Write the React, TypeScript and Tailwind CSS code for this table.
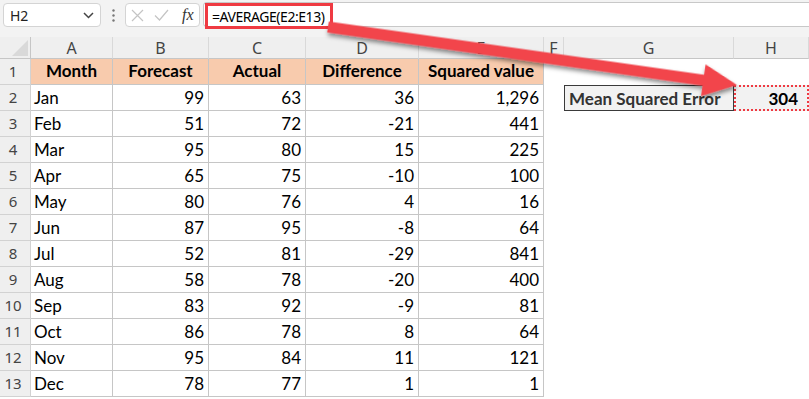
import React from "react";

type Row = [string, number, number, number, string];

const rows: Row[] = [
  ["Jan", 99, 63, 36, "1,296"],
  ["Feb", 51, 72, -21, "441"],
  ["Mar", 95, 80, 15, "225"],
  ["Apr", 65, 75, -10, "100"],
  ["May", 80, 76, 4, "16"],
  ["Jun", 87, 95, -8, "64"],
  ["Jul", 52, 81, -29, "841"],
  ["Aug", 58, 78, -20, "400"],
  ["Sep", 83, 92, -9, "81"],
  ["Oct", 86, 78, 8, "64"],
  ["Nov", 95, 84, 11, "121"],
  ["Dec", 78, 77, 1, "1"],
];

const letters = ["A", "B", "C", "D", "E", "F", "G", "H"];
const headers = ["Month", "Forecast", "Actual", "Difference", "Squared value"];

const cellFont = { fontFamily: "Lato, 'Liberation Sans', sans-serif" };
const uiFont = { fontFamily: "'Noto Sans', 'Open Sans', sans-serif" };

function RowHead({ n }: { n: number }) {
  return (
    <div
      className="h-[26px] bg-[#efefef] border-b border-r border-[#d2d2d2] flex items-center justify-center pr-[4px] text-[15px] text-[#444]"
      style={uiFont}
    >
      {n}
    </div>
  );
}

function Cell({
  children,
  align = "right",
  bold = false,
  head = false,
}: {
  children?: React.ReactNode;
  align?: "left" | "right" | "center";
  bold?: boolean;
  head?: boolean;
}) {
  const a =
    align === "left" ? "justify-start pl-[3px]" : align === "center" ? "justify-center" : "justify-end pr-[4px]";
  return (
    <div
      className={`h-[26px] border-b border-r border-[#c6c6c6] flex items-center leading-[17px] text-[17px] text-black ${a} ${
        bold ? "font-bold pb-[2px]" : ""
      } ${head ? "bg-[#f8cbad]" : "bg-white"}`}
      style={cellFont}
    >
      {children}
    </div>
  );
}

function Blank() {
  return <div className="h-[26px] bg-white" />;
}

function Arrow() {
  // shaft from the formula box down to the result cell
  const x0 = 328;
  const y0 = 27;
  const x1 = 737;
  const y1 = 85;
  const len = Math.hypot(x1 - x0, y1 - y0);
  const ang = (Math.atan2(y1 - y0, x1 - x0) * 180) / Math.PI;
  const head = 34;
  return (
    <svg className="absolute inset-0 pointer-events-none" width={809} height={399}>
      <defs>
        <filter id="arrowShadow" x="-10%" y="-50%" width="120%" height="200%">
          <feDropShadow dx="1" dy="3" stdDeviation="2" floodColor="#000" floodOpacity="0.45" />
        </filter>
      </defs>
      <g transform={`translate(${x0} ${y0}) rotate(${ang})`} filter="url(#arrowShadow)">
        <polygon
          points={`0,-5.5 ${len - head},-5.5 ${len - head},-16 ${len},0 ${len - head},16 ${len - head},5.5 0,5.5`}
          fill="#f2444b"
        />
      </g>
    </svg>
  );
}

export default function App() {
  return (
    <div className="relative w-[809px] h-[399px] overflow-hidden bg-white">
      {/* formula bar */}
      <div className="h-[37px] bg-[#f3f3f3] flex items-start pt-[3px]" style={uiFont}>
        <div className="ml-[3px] w-[98px] h-[24px] bg-white border border-[#d4d4d4] rounded-[4px] flex items-center pl-[6px] pr-[6px] text-[14px] text-[#222]">
          <span className="flex-1">H2</span>
          <svg width="11" height="7" viewBox="0 0 11 7">
            <path d="M1 1l4.5 4.5L10 1" fill="none" stroke="#444" strokeWidth="1.5" />
          </svg>
        </div>
        <div className="w-[24px] h-[24px] flex items-center justify-center">
          <svg width="3" height="13" viewBox="0 0 3 13">
            <circle cx="1.5" cy="1.5" r="1.2" fill="#777" />
            <circle cx="1.5" cy="6.5" r="1.2" fill="#777" />
            <circle cx="1.5" cy="11.5" r="1.2" fill="#777" />
          </svg>
        </div>
        <div className="w-[75px] h-[24px] bg-white border border-[#d4d4d4] rounded-[4px] flex items-center pl-[5px] gap-[10px]">
          <svg width="13" height="13" viewBox="0 0 13 13">
            <path d="M1 1l11 11M12 1L1 12" stroke="#c4c4c4" strokeWidth="1.2" />
          </svg>
          <svg width="15" height="12" viewBox="0 0 15 12">
            <path d="M1 6.5l4.5 4.5L14 1" fill="none" stroke="#c4c4c4" strokeWidth="1.2" />
          </svg>
          <span
            className="italic text-[16px] text-[#333] leading-none ml-[3px]"
            style={{ fontFamily: "'Liberation Serif', serif" }}
          >
            fx
          </span>
        </div>
        <div className="ml-[3px] -mt-[1px] flex-1 h-[25px] bg-white border-y border-l border-[#c8c8c8] rounded-l-[4px] flex items-start">
          <div className="ml-[1px] h-[26px] w-[128px] border-[3px] border-[#ef3a42] flex items-center pl-[4px] text-[14px] tracking-[-0.45px] whitespace-nowrap text-black">
            =AVERAGE(E2:E13)
          </div>
        </div>
      </div>

      {/* sheet grid */}
      <div className="grid grid-cols-[31px_82px_96px_97px_113px_125px_20px_170px_75px]">
        {/* column headings */}
        <div className="h-[22px] bg-[#efefef] border-b border-r border-[#c6c6c6] relative overflow-hidden">
          <div className="absolute right-[2px] bottom-[2px] w-0 h-0 border-l-[16px] border-l-transparent border-b-[16px] border-b-[#d9d9d9]" />
        </div>
        {letters.map((l) => (
          <div
            key={l}
            className="h-[22px] bg-[#efefef] border-b border-r border-[#c6c6c6] border-r-[#d9d9d9] flex items-center justify-center text-[16px] text-[#444]"
            style={uiFont}
          >
            {l}
          </div>
        ))}

        {/* row 1 */}
        <RowHead n={1} />
        {headers.map((h) => (
          <Cell key={h} align="center" bold head>
            {h}
          </Cell>
        ))}
        <Blank />
        <Blank />
        <Blank />

        {rows.map((r, i) => (
          <React.Fragment key={r[0]}>
            <RowHead n={i + 2} />
            <Cell align="left">{r[0]}</Cell>
            <Cell>{r[1]}</Cell>
            <Cell>{r[2]}</Cell>
            <Cell>{r[3]}</Cell>
            <Cell>{r[4]}</Cell>
            <Blank />
            {i === 0 ? (
              <>
                <div
                  className="h-[26px] bg-[#f2f2f2] border border-[#3a3a3a] flex items-center leading-[17px] pl-[4px] text-[17px] font-bold text-[#333]"
                  style={cellFont}
                >
                  Mean Squared Error
                </div>
                <div
                  className="h-[26px] bg-[#f2f2f2] border-2 border-dotted border-[#ef3a42] flex items-center leading-[17px] justify-end pr-[9px] text-[17px] font-bold text-black"
                  style={cellFont}
                >
                  304
                </div>
              </>
            ) : (
              <>
                <Blank />
                <Blank />
              </>
            )}
          </React.Fragment>
        ))}
      </div>

      <Arrow />
    </div>
  );
}
